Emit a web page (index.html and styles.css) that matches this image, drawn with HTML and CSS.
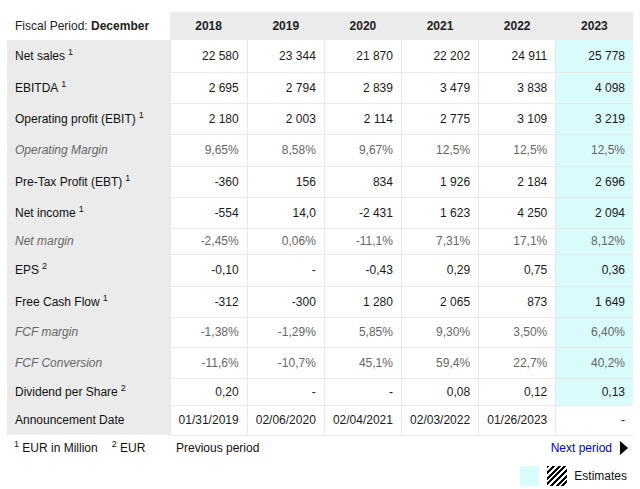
FILE: index.html
```html
<!DOCTYPE html>
<html>
<head>
<meta charset="utf-8">
<link rel="stylesheet" href="styles.css">
</head>
<body>
<div class="wrap">
  <table class="fin">
    <colgroup>
      <col class="c-label"><col class="c-val"><col class="c-val"><col class="c-val"><col class="c-val"><col class="c-val"><col class="c-val">
    </colgroup>
    <thead>
      <tr class="h">
        <th class="period">Fiscal Period: <b>December</b></th>
        <th>2018</th><th>2019</th><th>2020</th><th>2021</th><th>2022</th><th>2023</th>
      </tr>
    </thead>
    <tbody>
      <tr class="r32"><td class="lab">Net sales<sup>1</sup></td><td>22 580</td><td>23 344</td><td>21 870</td><td>22 202</td><td>24 911</td><td class="est">25 778</td></tr>
      <tr class="r31"><td class="lab">EBITDA<sup>1</sup></td><td>2 695</td><td>2 794</td><td>2 839</td><td>3 479</td><td>3 838</td><td class="est">4 098</td></tr>
      <tr class="r31"><td class="lab">Operating profit (EBIT)<sup>1</sup></td><td>2 180</td><td>2 003</td><td>2 114</td><td>2 775</td><td>3 109</td><td class="est">3 219</td></tr>
      <tr class="r32 it"><td class="lab">Operating Margin</td><td>9,65%</td><td>8,58%</td><td>9,67%</td><td>12,5%</td><td>12,5%</td><td class="est">12,5%</td></tr>
      <tr class="r31"><td class="lab">Pre-Tax Profit (EBT)<sup>1</sup></td><td>-360</td><td>156</td><td>834</td><td>1 926</td><td>2 184</td><td class="est">2 696</td></tr>
      <tr class="r31"><td class="lab">Net income<sup>1</sup></td><td>-554</td><td>14,0</td><td>-2 431</td><td>1 623</td><td>4 250</td><td class="est">2 094</td></tr>
      <tr class="r26 it"><td class="lab">Net margin</td><td>-2,45%</td><td>0,06%</td><td>-11,1%</td><td>7,31%</td><td>17,1%</td><td class="est">8,12%</td></tr>
      <tr class="r32"><td class="lab">EPS<sup>2</sup></td><td>-0,10</td><td>-</td><td>-0,43</td><td>0,29</td><td>0,75</td><td class="est">0,36</td></tr>
      <tr class="r31"><td class="lab">Free Cash Flow<sup>1</sup></td><td>-312</td><td>-300</td><td>1 280</td><td>2 065</td><td>873</td><td class="est">1 649</td></tr>
      <tr class="r30 it"><td class="lab">FCF margin</td><td>-1,38%</td><td>-1,29%</td><td>5,85%</td><td>9,30%</td><td>3,50%</td><td class="est">6,40%</td></tr>
      <tr class="r31 it"><td class="lab">FCF Conversion</td><td>-11,6%</td><td>-10,7%</td><td>45,1%</td><td>59,4%</td><td>22,7%</td><td class="est">40,2%</td></tr>
      <tr class="r27"><td class="lab">Dividend per Share<sup>2</sup></td><td>0,20</td><td>-</td><td>-</td><td>0,08</td><td>0,12</td><td class="est">0,13</td></tr>
      <tr class="r30"><td class="lab">Announcement Date</td><td>01/31/2019</td><td>02/06/2020</td><td>02/04/2021</td><td>02/03/2022</td><td>01/26/2023</td><td>-</td></tr>
    </tbody>
  </table>
  <div class="foot">
    <div class="notes"><span><sup>1</sup> EUR in Million</span><span><sup>2</sup> EUR</span></div>
    <div class="prev">Previous period</div>
    <div class="next"><span>Next period</span><span class="tri"></span></div>
  </div>
  <div class="legend">
    <span class="sw-est"></span>
    <span class="sw-hatch"></span>
    <span class="leg-text">Estimates</span>
  </div>
</div>
</body>
</html>
```

FILE: styles.css
```css
html, body {
  margin: 0;
  padding: 0;
  background: #ffffff;
}
body {
  font-family: "Liberation Sans", Arial, sans-serif;
  font-size: 12px;
  color: #111111;
}
.wrap {
  padding: 12px 7px 0 7px;
}
.fin {
  width: 626px;
  border-collapse: collapse;
  table-layout: fixed;
}
.c-label { width: 163px; }
.fin th, .fin td {
  padding: 0 8px;
  white-space: nowrap;
}
.fin thead th {
  height: 28px;
  background: #ebebeb;
  font-weight: bold;
  text-align: center;
  color: #222222;
}
.fin thead th.period {
  background: #ffffff;
  text-align: left;
  font-weight: normal;
  color: #222222;
}
.fin thead th.period b {
  font-weight: bold;
}
.fin tbody td {
  text-align: right;
  border: 1px solid #e9e9e9;
  border-top: none;
  color: #1a1a1a;
}
.fin tbody tr:first-child td { border-top: none; }
.fin tbody td.lab {
  text-align: left;
  background: #ebebeb;
  border: none;
  color: #111111;
}
.fin tbody td:last-child { border-right: none; }
.fin tbody td.est {
  background: #d9fbfc;
}
.fin sup {
  font-size: 9px;
  margin-left: 3px;
  vertical-align: 5px;
  line-height: 0;
}
.fin tr.it td {
  font-style: italic;
  color: #666666;
}
.fin tr.it td:not(.lab) {
  font-style: normal;
}
.r32 { height: 32px; }
.r31 { height: 31px; }
.r30 { height: 30px; }
.r27 { height: 27px; }
.r26 { height: 26px; }
.foot {
  display: flex;
  align-items: center;
  height: 24px;
}
.notes {
  width: 162px;
  padding-left: 7px;
  display: flex;
  gap: 14px;
  color: #111111;
}
.notes sup {
  font-size: 9px;
  vertical-align: 5px;
  line-height: 0;
}
.prev {
  color: #111111;
}
.next {
  margin-left: auto;
  display: flex;
  align-items: center;
  gap: 8px;
  color: #0000ee;
  margin-right: 5px;
}
.tri {
  width: 0;
  height: 0;
  border-top: 7px solid transparent;
  border-bottom: 7px solid transparent;
  border-left: 8px solid #000000;
}
.legend {
  display: flex;
  justify-content: flex-end;
  align-items: center;
  height: 20px;
  margin-top: 6px;
  padding-right: 6px;
}
.sw-est {
  width: 19px;
  height: 20px;
  background: #d9fbfc;
}
.sw-hatch {
  width: 20px;
  height: 20px;
  margin-left: 8px;
  background: repeating-linear-gradient(135deg, #000000 0 2px, #ffffff 2px 4px);
}
.leg-text {
  margin-left: 7px;
  color: #111111;
}
```
